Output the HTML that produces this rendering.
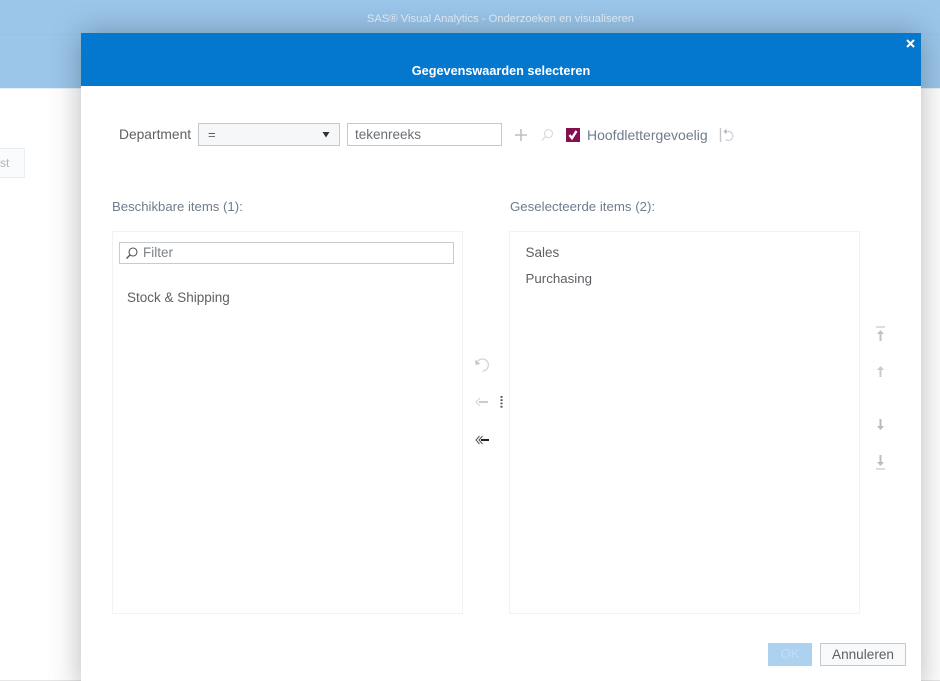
<!DOCTYPE html>
<html><head><meta charset="utf-8"><style>
html,body{margin:0;padding:0;background:#fff}
#p{position:relative;width:940px;height:681px;overflow:hidden;background:#fff;font-family:"Liberation Sans",sans-serif;font-size:14px;color:#5f6064;filter:blur(.35px)}
#p div,#p svg{position:absolute}
.t{white-space:nowrap;line-height:18px}
.g{color:#6f7c8d}
.b{border:1px solid #c4c9cf;box-sizing:border-box}
.l{border:1px solid #f1f2f4;box-sizing:border-box;background:#fff}
svg{fill:none}
</style></head><body><div id="p">
<div style="left:0;top:0;width:940px;height:88px;background:#9bc6ea"></div>
<div style="left:0;top:34px;width:940px;height:1px;background:#97c2e6"></div>
<div style="left:0;top:88px;width:940px;height:1px;background:#e8f0f7"></div>
<div style="left:0;top:680px;width:940px;height:1px;background:#e6e6e6"></div>
<div class="t" style="left:0;top:10px;width:1001px;text-align:center;color:#e6f1fa;font-size:11.2px;letter-spacing:.02px">SAS® Visual Analytics - Onderzoeken en visualiseren</div>
<div style="left:-10px;top:148px;width:35px;height:30px;border:1px solid #e9edf1;box-sizing:border-box;background:#fafbfc"></div>
<div class="t" style="left:0;top:154px;color:#b0b4b8;font-size:12px">st</div>

<div style="left:81px;top:33px;width:840px;height:660px;background:#fff;box-shadow:0 0 30px rgba(0,0,0,.28)"></div>
<div style="left:81px;top:33px;width:840px;height:53px;background:#0477ce"></div>
<div class="t" style="left:81px;top:62px;width:840px;text-align:center;color:#fff;font-weight:bold;font-size:12.7px">Gegevenswaarden selecteren</div>
<svg style="left:905px;top:38px" width="11" height="11" viewBox="0 0 11 11"><path d="M2 2l7 7M9 2l-7 7" stroke="#fff" stroke-width="2"/></svg>

<div class="t" style="left:119px;top:126px;font-size:13.8px">Department</div>
<div class="b" style="left:198px;top:123px;width:142px;height:23px;background:#f6f7f8"></div>
<div class="t" style="left:208px;top:126px;font-size:13px">=</div>
<svg style="left:322px;top:131px" width="8" height="7" viewBox="0 0 8 7"><path d="M.5 1h7L4 6.500z" fill="#333"/></svg>
<div class="b" style="left:347px;top:123px;width:155px;height:23px"></div>
<div class="t" style="left:355px;top:126px;font-size:13.5px;color:#6a6f75">tekenreeks</div>
<svg style="left:514px;top:128px" width="14" height="14" viewBox="0 0 14 14"><path d="M7 1v12M1 7h12" stroke="#bcc1c7" stroke-width="1.600"/></svg>
<svg style="left:541px;top:128px" width="13" height="14" viewBox="0 0 13 14"><circle cx="7.500" cy="5.500" r="4" stroke="#d6d8db" stroke-width="1.100"/><path d="M4.500 8.500L1 12.500" stroke="#d6d8db" stroke-width="1.300"/></svg>
<div style="left:566px;top:128px;width:14px;height:14px;background:#85104f"></div>
<svg style="left:566px;top:128px" width="14" height="14" viewBox="0 0 14 14"><path d="M3.500 7l2.500 3.200L10.500 3" stroke="#fff" stroke-width="2.400"/></svg>
<div class="t g" style="left:587px;top:126px;font-size:14px">Hoofdlettergevoelig</div>
<svg style="left:719px;top:127px" width="16" height="16" viewBox="0 0 16 16"><path d="M1.500 1v14" stroke="#c3c7cc" stroke-width="1.400"/><path d="M7 4.500h2.500a4.500 4.500 0 1 1-3 8" stroke="#cdd0d4" stroke-width="1.200"/><path d="M7.500 1.500v6L4.500 4.500z" fill="#b5b9be"/></svg>

<div class="t g" style="left:112px;top:198px;font-size:13.15px">Beschikbare items (1):</div>
<div class="t g" style="left:510px;top:198px;font-size:13.25px">Geselecteerde items (2):</div>
<div class="l" style="left:112px;top:231px;width:351px;height:383px"></div>
<div class="l" style="left:509px;top:231px;width:351px;height:383px"></div>
<div class="b" style="left:119px;top:242px;width:335px;height:22px;border-color:#c8ccd1"></div>
<svg style="left:125px;top:246px" width="14" height="14" viewBox="0 0 14 14"><circle cx="8" cy="6" r="4" stroke="#555" stroke-width="1.100"/><path d="M5 9l-3.500 3.500" stroke="#555" stroke-width="1.400"/></svg>
<div class="t" style="left:143px;top:244px;font-size:13.5px;color:#7d8288">Filter</div>
<div class="t" style="left:127px;top:289px;font-size:13.5px">Stock &amp; Shipping</div>
<div class="t" style="left:525.500px;top:244px;font-size:13.5px">Sales</div>
<div class="t" style="left:525.500px;top:270px;font-size:13.3px">Purchasing</div>

<svg style="left:473px;top:356px" width="18" height="18" viewBox="0 0 18 18"><path d="M4.500 5.500A6 6 0 1 1 9.500 15" stroke="#d0d3d6" stroke-width="1.300"/><path d="M2 3.500l.5 5.500 5-1z" fill="#c6c9cc"/></svg>
<svg style="left:474px;top:396px" width="16" height="12" viewBox="0 0 16 12"><path d="M6 2L2 6l4 4" stroke="#d0d3d6" stroke-width="1"/><path d="M5 6h9" stroke="#c4c7ca" stroke-width="1.800"/></svg>
<svg style="left:499px;top:395px" width="5" height="14" viewBox="0 0 5 14"><path d="M2.500 1v12" stroke="#4a4d52" stroke-width="2" stroke-dasharray="1.700 1.600"/></svg>
<svg style="left:474px;top:434px" width="16" height="12" viewBox="0 0 16 12"><path d="M5.500 2L2 6l3.500 4M8.500 2L5 6l3.500 4" stroke="#555" stroke-width="1"/><path d="M7 6h8" stroke="#222" stroke-width="2"/></svg>

<svg style="left:874px;top:326px" width="13" height="16" viewBox="0 0 13 16"><path d="M2 1h9" stroke="#c6c8cb" stroke-width="1.200"/><path d="M6.500 7v8" stroke="#c0c2c5" stroke-width="2"/><path d="M3 8l3.500-4L10 8z" fill="#c0c2c5"/></svg>
<svg style="left:874px;top:364px" width="13" height="14" viewBox="0 0 13 14"><path d="M6.500 5v8" stroke="#c8cacd" stroke-width="2"/><path d="M3 6l3.500-4L10 6z" fill="#c8cacd"/></svg>
<svg style="left:874px;top:418px" width="13" height="14" viewBox="0 0 13 14"><path d="M6.500 1v8" stroke="#b8babd" stroke-width="2"/><path d="M3 8l3.500 4L10 8z" fill="#b8babd"/></svg>
<svg style="left:874px;top:454px" width="13" height="16" viewBox="0 0 13 16"><path d="M6.500 1v8" stroke="#bcbec1" stroke-width="2"/><path d="M3 8l3.500 4L10 8z" fill="#bcbec1"/><path d="M2 15h9" stroke="#c6c8cb" stroke-width="1.200"/></svg>

<div style="left:768px;top:643px;width:44px;height:23px;background:#add2f0"></div>
<div class="t" style="left:768px;top:645px;width:44px;text-align:center;color:#c2def4;font-size:13px">OK</div>
<div class="b" style="left:820px;top:643px;width:86px;height:23px;background:#f8f9fa"></div>
<div class="t" style="left:820px;top:646px;width:86px;text-align:center;font-size:13.600px">Annuleren</div>
</div></body></html>
